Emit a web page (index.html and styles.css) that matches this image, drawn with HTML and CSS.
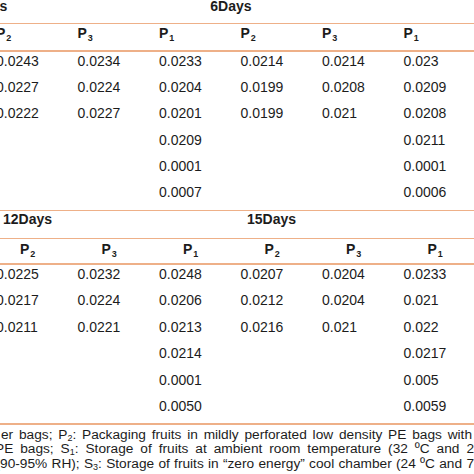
FILE: index.html
```html
<!DOCTYPE html>
<html>
<head>
<meta charset="utf-8">
<link rel="stylesheet" href="styles.css">
</head>
<body>
<div class="sheet">
  <div class="dayrow top">
    <span class="day d3">3Days</span>
    <span class="day d6">6Days</span>
  </div>
  <div class="rule"></div>
  <div class="grid hrow hrow-top">
    <div>P<sub>2</sub></div><div>P<sub>3</sub></div><div>P<sub>1</sub></div>
    <div>P<sub>2</sub></div><div>P<sub>3</sub></div><div>P<sub>1</sub></div>
  </div>
  <div class="rule"></div>
  <div class="grid data">
    <div>0.0243</div><div>0.0234</div><div>0.0233</div><div>0.0214</div><div>0.0214</div><div>0.023</div>
    <div>0.0227</div><div>0.0224</div><div>0.0204</div><div>0.0199</div><div>0.0208</div><div>0.0209</div>
    <div>0.0222</div><div>0.0227</div><div>0.0201</div><div>0.0199</div><div>0.021</div><div>0.0208</div>
    <div></div><div></div><div>0.0209</div><div></div><div></div><div>0.0211</div>
    <div></div><div></div><div>0.0001</div><div></div><div></div><div>0.0001</div>
    <div></div><div></div><div>0.0007</div><div></div><div></div><div>0.0006</div>
  </div>
  <div class="rule"></div>
  <div class="dayrow bottom">
    <span class="day d12">12Days</span>
    <span class="day d15">15Days</span>
  </div>
  <div class="rule"></div>
  <div class="grid hrow hrow-bottom">
    <div>P<sub>2</sub></div><div>P<sub>3</sub></div><div>P<sub>1</sub></div>
    <div>P<sub>2</sub></div><div>P<sub>3</sub></div><div>P<sub>1</sub></div>
  </div>
  <div class="rule"></div>
  <div class="grid data">
    <div>0.0225</div><div>0.0232</div><div>0.0248</div><div>0.0207</div><div>0.0204</div><div>0.0233</div>
    <div>0.0217</div><div>0.0224</div><div>0.0206</div><div>0.0212</div><div>0.0204</div><div>0.021</div>
    <div>0.0211</div><div>0.0221</div><div>0.0213</div><div>0.0216</div><div>0.021</div><div>0.022</div>
    <div></div><div></div><div>0.0214</div><div></div><div></div><div>0.0217</div>
    <div></div><div></div><div>0.0001</div><div></div><div></div><div>0.005</div>
    <div></div><div></div><div>0.0050</div><div></div><div></div><div>0.0059</div>
  </div>
  <div class="rule"></div>
</div>
<div class="notes">
  <div class="line l1">er bags; P<sub>2</sub>: Packaging fruits in mildly perforated low density PE bags with</div>
  <div class="line l2">PE bags; S<sub>1</sub>: Storage of fruits at ambient room temperature (32 ºC and 2</div>
  <div class="line l3">(90-95% RH); S<sub>3</sub>: Storage of fruits in “zero energy” cool chamber (24 ºC and 7</div>
</div>
</body>
</html>
```
FILE: styles.css
```css
html, body {
  margin: 0;
  padding: 0;
  background: #ffffff;
}
body {
  width: 474px;
  height: 474px;
  overflow: hidden;
  font-family: "Liberation Sans", Arial, sans-serif;
  color: #1c1c1c;
  font-size: 14px;
}
.sheet {
  margin-left: -4px;
  width: 500px;
}
.rule {
  height: 1.5px;
  background: #eeb088;
}
.grid {
  display: grid;
  grid-template-columns: repeat(6, 81.5px);
}
.dayrow {
  display: flex;
  font-weight: bold;
}
.dayrow .day {
  flex: none;
}
.dayrow.top {
  height: 22.5px;
  line-height: 12px;
}
.dayrow.bottom {
  height: 26.6px;
  line-height: 16px;
}
.d3 { margin-left: -30px; }
.d6 { margin-left: 203px; }
.d12 { margin-left: 7px; }
.d15 { margin-left: 195px; }
.hrow {
  font-weight: bold;
  line-height: 18px;
}
.hrow sub {
  font-size: 9px;
  line-height: 0;
  vertical-align: -3px;
  margin-left: 1px;
}
.hrow-top {
  height: 26px;
}
.hrow-bottom {
  height: 24px;
  padding-top: 0.5px;
  box-sizing: border-box;
}
.hrow-bottom > div {
  padding-left: 24px;
}
.data {
  grid-auto-rows: 26.4px;
  line-height: 18px;
}
.notes {
  padding-top: 3px;
  font-size: 13.7px;
  line-height: 14.5px;
}
.notes .line {
  text-align: justify;
  text-align-last: justify;
}
.notes sub {
  font-size: 9px;
  line-height: 0;
  vertical-align: -2px;
}
.l1 { margin-left: 1px; width: 471px; }
.l2 { margin-left: -5px; width: 479px; }
.l3 { margin-left: -4.5px; width: 478.5px; }
```
